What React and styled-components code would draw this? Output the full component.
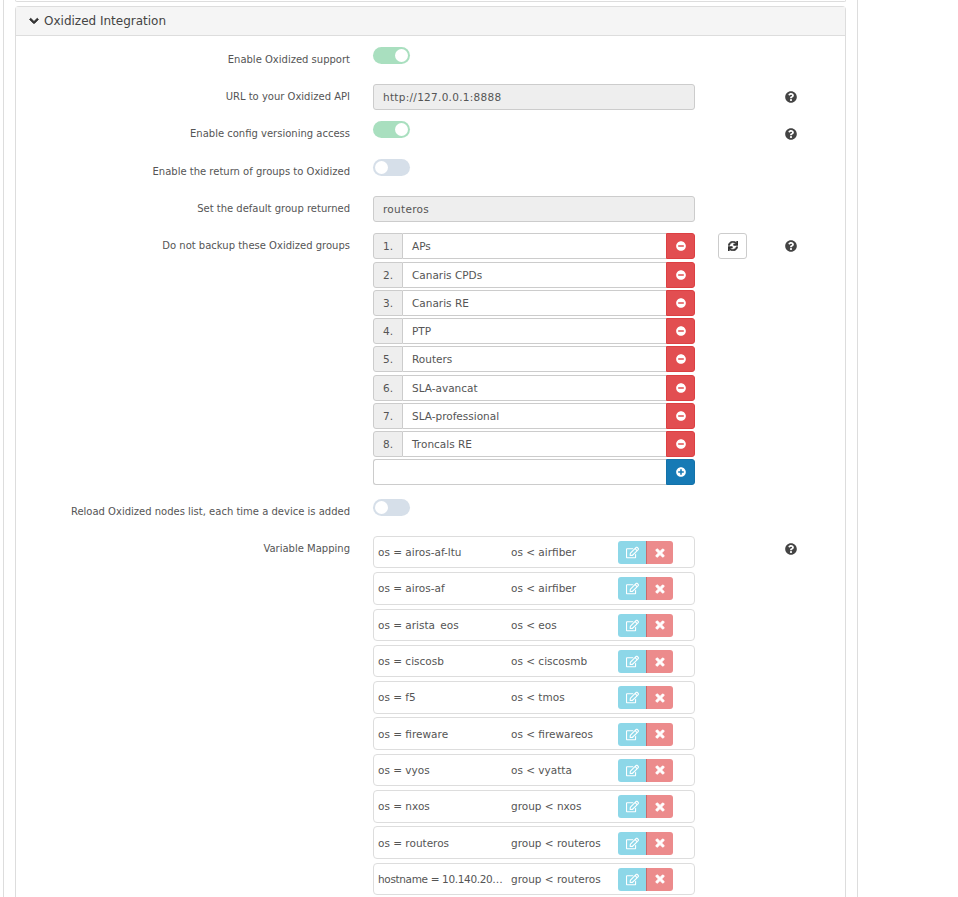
import React from "react";
import styled, { createGlobalStyle } from "styled-components";
import {
  FaChevronDown,
  FaQuestionCircle,
  FaMinusCircle,
  FaPlusCircle,
  FaSync,
  FaRegEdit,
  FaTimes,
} from "react-icons/fa";

const GlobalStyle = createGlobalStyle`
  html, body {
    margin: 0;
    padding: 0;
    background: #ffffff;
  }
  body {
    font-family: "DejaVu Sans", Verdana, sans-serif;
    font-size: 10.5px;
    color: #555555;
  }
`;

const Page = styled.div`
  box-sizing: border-box;
  width: 855px;
  height: 897px;
  margin-left: 3px;
  padding: 0 11px;
  overflow: hidden;
  border-left: 1px solid #dddddd;
  border-right: 1px solid #dddddd;
`;

const PrevPanel = styled.div`
  height: 1px;
  margin-bottom: 4px;
  border: 1px solid #dddddd;
  border-top: 0;
  border-radius: 0 0 4px 4px;
`;

const Panel = styled.section`
  border: 1px solid #dddddd;
  border-radius: 4px 4px 0 0;
  border-bottom: 0;
`;

const PanelHeading = styled.div`
  display: flex;
  align-items: center;
  gap: 5px;
  height: 28px;
  padding-left: 13px;
  background: #f5f5f5;
  border-bottom: 1px solid #dddddd;
  font-size: 12px;
  color: #444444;

  svg {
    color: #333333;
    stroke: currentColor;
    stroke-width: 50px;
  }
`;

const PanelBody = styled.div`
  display: flex;
  flex-direction: column;
  padding-top: 11px;
`;

const FormRow = styled.div`
  display: grid;
  grid-template-columns: 334px 23px 322px 23px 29px 38px 14px;
  margin-bottom: ${(p) => p.$mb || 11.2}px;
`;

const Label = styled.label`
  grid-column: 1;
  text-align: right;
  line-height: 14px;
  padding-top: 6px;
  font-size: 10px;
`;

const Control = styled.div`
  grid-column: 3;
  min-height: 26px;
  min-width: 0;
`;

const Switch = styled.div`
  display: flex;
  align-items: center;
  justify-content: ${(p) => (p.$on ? "flex-end" : "flex-start")};
  box-sizing: border-box;
  width: 37px;
  height: 17px;
  padding: 0 2px;
  border-radius: 9px;
  background: ${(p) => (p.$on ? "#a9dfbf" : "#d6dfe9")};
  &::after {
    content: "";
    width: 13px;
    height: 13px;
    border-radius: 50%;
    background: #ffffff;
  }
`;

const TextField = styled.div`
  box-sizing: border-box;
  height: 26px;
  padding: 0 9px;
  line-height: 25px;
  letter-spacing: 0.28px;
  background: #eeeeee;
  border: 1px solid #cccccc;
  border-radius: 3px;
`;

const GroupList = styled.div`
  display: flex;
  flex-direction: column;
  gap: 2.25px;
`;

const GroupRow = styled.div`
  display: flex;
  height: 26px;
`;

const GroupIndex = styled.span`
  box-sizing: border-box;
  width: 30px;
  text-align: center;
  line-height: 25px;
  background: #eeeeee;
  border: 1px solid #cccccc;
  border-radius: 3px 0 0 3px;
`;

const GroupName = styled.span`
  flex: 1;
  box-sizing: border-box;
  padding-left: 9px;
  line-height: 25px;
  background: #ffffff;
  border: 1px solid #cccccc;
  border-left: ${(p) => (p.$first ? "1px solid #cccccc" : 0)};
  border-right: 0;
  border-radius: ${(p) => (p.$first ? "3px 0 0 3px" : 0)};
`;

const GroupButton = styled.span`
  display: flex;
  align-items: center;
  justify-content: center;
  box-sizing: border-box;
  width: 29px;
  color: #ffffff;
  font-size: 10px;
  border-radius: 0 3px 3px 0;
  background: ${(p) => (p.$add ? "#167ab5" : "#e24e51")};
  border: 1px solid ${(p) => (p.$add ? "#1472a9" : "#dc3f42")};
`;

const ReloadCell = styled.div`
  grid-column: 5;
`;

const ReloadButton = styled.span`
  display: flex;
  align-items: center;
  justify-content: center;
  box-sizing: border-box;
  width: 29px;
  height: 26px;
  border: 1px solid #cccccc;
  border-radius: 3px;
  color: #333333;
  font-size: 10px;

  svg {
    stroke: currentColor;
    stroke-width: 30px;
  }
`;

const Help = styled.div`
  grid-column: 7;
  padding-top: 7px;
  color: #444444;
  font-size: 12px;
  line-height: 12px;
`;

const MappingList = styled.div`
  display: flex;
  flex-direction: column;
  gap: 3.8px;
`;

const MappingRow = styled.div`
  display: flex;
  align-items: center;
  box-sizing: border-box;
  height: 32.5px;
  padding-left: 4px;
  border: 1px solid #dddddd;
  border-radius: 4px;
`;

const MapCondition = styled.span`
  width: 126px;
  margin-right: 7px;
  overflow: hidden;
  white-space: nowrap;
  text-overflow: ellipsis;
  letter-spacing: ${(p) => (p.$long ? "-0.35px" : "normal")};
`;

const MapTarget = styled.span`
  width: 107px;
  white-space: nowrap;
`;

const MapButton = styled.span`
  display: flex;
  align-items: center;
  justify-content: center;
  box-sizing: border-box;
  height: 23px;
  margin-top: 1px;
  color: #ffffff;
  font-size: ${(p) => (p.$edit ? 13 : 12)}px;
  width: ${(p) => (p.$edit ? 28 : 27)}px;
  background: ${(p) => (p.$edit ? "#8dd7e8" : "#ec8b8c")};
  border-radius: ${(p) => (p.$edit ? "3px 0 0 3px" : "0 3px 3px 0")};
  border-left: ${(p) => (p.$edit ? 0 : "1px solid #c96a6c")};

  svg {
    stroke: currentColor;
    stroke-width: ${(p) => (p.$edit ? 0 : 40)}px;
  }
`;

const groups = [
  "APs",
  "Canaris CPDs",
  "Canaris RE",
  "PTP",
  "Routers",
  "SLA-avancat",
  "SLA-professional",
  "Troncals RE",
];

const mappings = [
  ["os = airos-af-ltu", "os < airfiber"],
  ["os = airos-af", "os < airfiber"],
  ["os = arista_eos", "os < eos"],
  ["os = ciscosb", "os < ciscosmb"],
  ["os = f5", "os < tmos"],
  ["os = fireware", "os < firewareos"],
  ["os = vyos", "os < vyatta"],
  ["os = nxos", "group < nxos"],
  ["os = routeros", "group < routeros"],
  ["hostname = 10.140.20.15", "group < routeros"],
];

const HelpIcon = () => (
  <Help>
    <FaQuestionCircle />
  </Help>
);

const App = () => {
  return (
    <Page>
      <GlobalStyle />
      <PrevPanel />
      <Panel>
        <PanelHeading>
          <FaChevronDown size={10} />
          Oxidized Integration
        </PanelHeading>
        <PanelBody>
          <FormRow>
            <Label>Enable Oxidized support</Label>
            <Control>
              <Switch $on />
            </Control>
          </FormRow>
          <FormRow>
            <Label>URL to your Oxidized API</Label>
            <Control>
              <TextField>http://127.0.0.1:8888</TextField>
            </Control>
            <HelpIcon />
          </FormRow>
          <FormRow>
            <Label>Enable config versioning access</Label>
            <Control>
              <Switch $on />
            </Control>
            <HelpIcon />
          </FormRow>
          <FormRow>
            <Label>Enable the return of groups to Oxidized</Label>
            <Control>
              <Switch />
            </Control>
          </FormRow>
          <FormRow $mb={11.6}>
            <Label>Set the default group returned</Label>
            <Control>
              <TextField>routeros</TextField>
            </Control>
          </FormRow>
          <FormRow $mb={13.6}>
            <Label>Do not backup these Oxidized groups</Label>
            <Control>
              <GroupList>
                {groups.map((name, i) => (
                  <GroupRow key={name}>
                    <GroupIndex>{i + 1}.</GroupIndex>
                    <GroupName>{name}</GroupName>
                    <GroupButton>
                      <FaMinusCircle />
                    </GroupButton>
                  </GroupRow>
                ))}
                <GroupRow>
                  <GroupName $first />
                  <GroupButton $add>
                    <FaPlusCircle />
                  </GroupButton>
                </GroupRow>
              </GroupList>
            </Control>
            <ReloadCell>
              <ReloadButton>
                <FaSync />
              </ReloadButton>
            </ReloadCell>
            <HelpIcon />
          </FormRow>
          <FormRow $mb={11}>
            <Label>Reload Oxidized nodes list, each time a device is added</Label>
            <Control>
              <Switch />
            </Control>
          </FormRow>
          <FormRow>
            <Label>Variable Mapping</Label>
            <Control>
              <MappingList>
                {mappings.map(([cond, target]) => (
                  <MappingRow key={cond}>
                    <MapCondition $long={cond.length > 20}>{cond}</MapCondition>
                    <MapTarget>{target}</MapTarget>
                    <MapButton $edit>
                      <FaRegEdit />
                    </MapButton>
                    <MapButton>
                      <FaTimes />
                    </MapButton>
                  </MappingRow>
                ))}
              </MappingList>
            </Control>
            <HelpIcon />
          </FormRow>
        </PanelBody>
      </Panel>
    </Page>
  );
};

export default App;
